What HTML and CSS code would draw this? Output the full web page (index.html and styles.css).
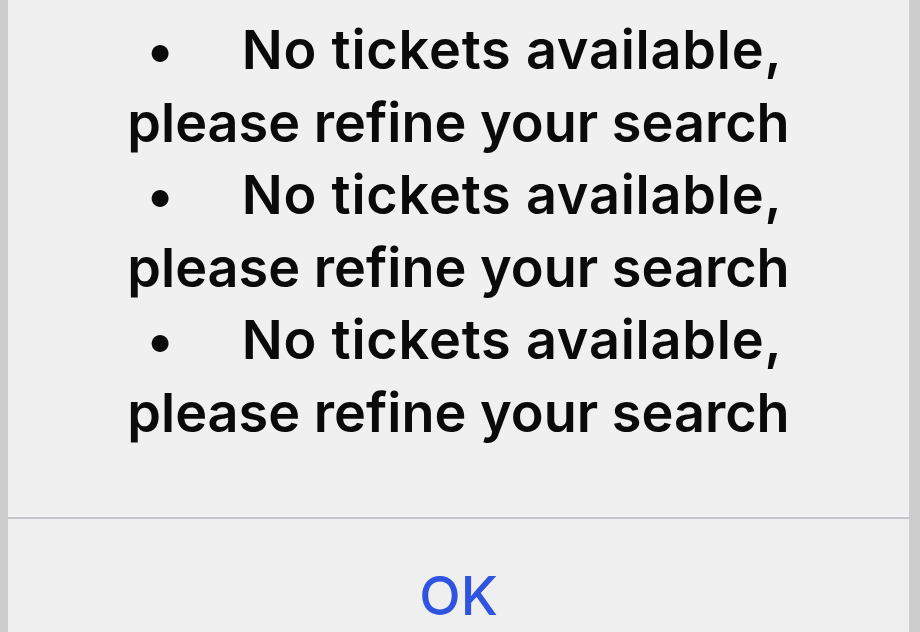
FILE: index.html
```html
<!DOCTYPE html>
<html>
<head>
<meta charset="utf-8">
<link rel="stylesheet" href="styles.css">
</head>
<body>
<div class="alert">
  <div class="message">
    <p class="line bullet-line"><span class="bullet">•</span><span class="item">No tickets available,</span></p>
    <p class="line">please refine your search</p>
    <p class="line bullet-line"><span class="bullet">•</span><span class="item">No tickets available,</span></p>
    <p class="line">please refine your search</p>
    <p class="line bullet-line"><span class="bullet">•</span><span class="item">No tickets available,</span></p>
    <p class="line">please refine your search</p>
  </div>
  <div class="separator"></div>
  <div class="actions">
    <span class="ok">OK</span>
  </div>
</div>
</body>
</html>
```

FILE: styles.css
```css
html, body {
  margin: 0;
  padding: 0;
  height: 100%;
}
body {
  background: #cdcdcd;
  font-family: Inter, "Liberation Sans", sans-serif;
  overflow: hidden;
}
.alert {
  margin: 0 11px 0 8px;
  height: 632px;
  background: #f0f0f0;
  display: flex;
  flex-direction: column;
}
.message {
  height: 516px;
  padding-top: 14px;
  box-sizing: border-box;
  text-align: center;
  color: #0a0a0a;
  font-weight: 600;
  font-size: 54px;
  line-height: 72.5px;
}
.line {
  margin: 0;
  white-space: nowrap;
}
.bullet-line {
  padding-left: 12px;
}
.bullet {
  display: inline-block;
  margin-right: 68px;
}
.item {
  letter-spacing: 0.8px;
}
.separator {
  height: 2px;
  background: #c3c5c8;
  border-top: 1px solid #f7f8f9;
}
.actions {
  flex: 1;
  display: flex;
  justify-content: center;
  background: #efeff0;
}
.ok {
  margin-top: 45px;
  font-size: 54px;
  font-weight: 500;
  color: #2f55e0;
  line-height: 64px;
}
```
